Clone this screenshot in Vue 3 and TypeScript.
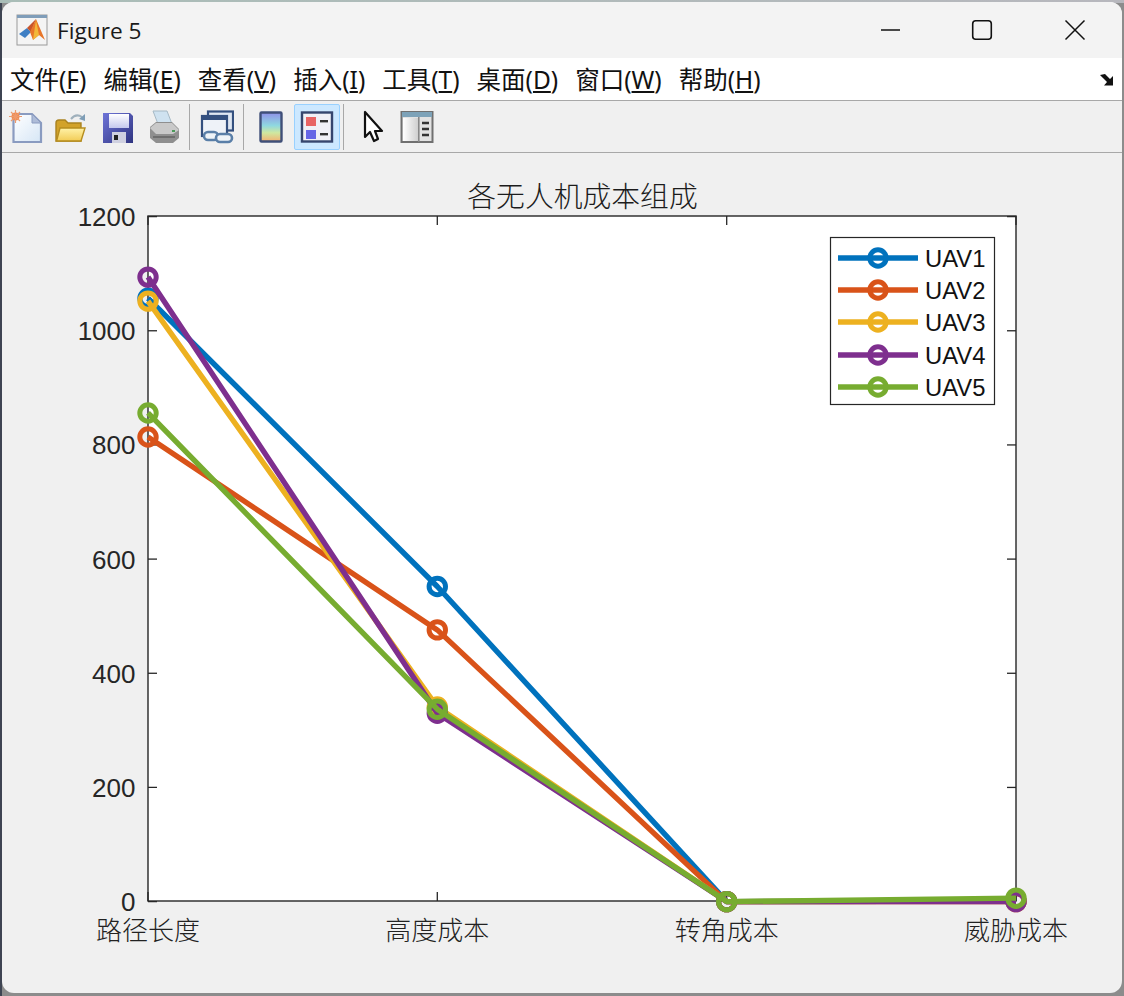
<script setup lang="ts">
// 数据值 -> 像素坐标，坐标轴范围 0~1200
const AX = { left: 148, right: 1016, top: 216, bottom: 901 }
const xPos = [148, 437.3, 726.7, 1016]
const toY = (v: number) => AX.bottom + 0.6 - (v * (AX.bottom - AX.top)) / 1200

const menus = [
  { label: '文件', key: 'F' },
  { label: '编辑', key: 'E' },
  { label: '查看', key: 'V' },
  { label: '插入', key: 'I' },
  { label: '工具', key: 'T' },
  { label: '桌面', key: 'D' },
  { label: '窗口', key: 'W' },
  { label: '帮助', key: 'H' },
]

const series = [
  { name: 'UAV1', color: '#0072bd', values: [1057, 552, 0, 1] },
  { name: 'UAV2', color: '#d95319', values: [814, 476, 0, 0] },
  { name: 'UAV3', color: '#edb120', values: [1052, 341, 0, 1] },
  { name: 'UAV4', color: '#7e2f8e', values: [1094, 330, 0, 0] },
  { name: 'UAV5', color: '#77ac30', values: [856, 337, 0, 6] },
].map((s) => ({
  ...s,
  pts: s.values.map((v, i) => ({ x: xPos[i], y: toY(v) })),
  line: s.values.map((v, i) => `${xPos[i]},${toY(v)}`).join(' '),
}))

const yTicks = [0, 200, 400, 600, 800, 1000, 1200]
const xLabels = ['路径长度', '高度成本', '转角成本', '威胁成本']
const legendRows = [258, 290, 322, 355, 387]
</script>

<template>
  <div class="desktop">
    <div class="window">
      <header class="titlebar">
        <svg class="app-icon" width="32" height="32" viewBox="0 0 32 32">
          <rect x="1" y="1" width="30" height="30" fill="#f4f4f4" stroke="#9a9a9a" />
          <rect x="1" y="1" width="30" height="3" fill="#7f9db9" />
          <path d="M3 20 L11 14 L15 18 L9 24 Z" fill="#3f7fc4" />
          <path d="M11 14 L20 5 L15 18 Z" fill="#c8552b" />
          <path d="M20 5 L29 26 L23 21 L17 26 L14 18 Z" fill="#e8762a" />
          <path d="M20 6 L23 21 L17 26 Z" fill="#f2b83a" />
        </svg>
        <span class="title-text">Figure 5</span>
        <div class="win-controls">
          <svg width="22" height="22" viewBox="0 0 22 22"><path d="M3 11 H22" stroke="#111" stroke-width="1.6" /></svg>
          <svg width="22" height="22" viewBox="0 0 22 22"><rect x="1.7" y="1.7" width="18.6" height="18.6" rx="3" fill="none" stroke="#111" stroke-width="1.6" /></svg>
          <svg width="22" height="22" viewBox="0 0 22 22"><path d="M1.5 1.5 L20.5 20.5 M20.5 1.5 L1.5 20.5" stroke="#111" stroke-width="1.5" /></svg>
        </div>
      </header>

      <nav class="menubar">
        <span v-for="m in menus" :key="m.key" class="menu-item">{{ m.label }}(<u>{{ m.key }}</u>)</span>
        <svg class="dock-arrow" width="16" height="14" viewBox="0 0 16 14">
          <path d="M1 2 L6 1 L11 6 L14 3 V12.5 H5 L8 9 L4 5 Z" fill="#111" />
        </svg>
      </nav>

      <div class="toolbar">
        <button class="tool">
          <svg width="34" height="34" viewBox="0 0 34 34">
            <defs>
              <linearGradient id="page" x1="0" y1="0" x2="1" y2="1">
                <stop offset="0" stop-color="#ffffff" />
                <stop offset="1" stop-color="#d6e6f6" />
              </linearGradient>
            </defs>
            <path d="M4.5 4 H23 L32 13 V32 H4.5 Z" fill="url(#page)" stroke="#8a9bc0" stroke-width="2.2" />
            <path d="M23 4 V13 H32 Z" fill="#aebcd8" stroke="#8a9bc0" />
            <circle cx="6.5" cy="6.5" r="4" fill="#f08a50" />
            <path d="M6.5 0 V13 M0 6.5 H13 M2 2 L11 11 M11 2 L2 11" stroke="#ee9a6c" stroke-width="1.2" />
          </svg>
        </button>
        <button class="tool">
          <svg width="34" height="34" viewBox="0 0 34 34">
            <defs>
              <linearGradient id="folder" x1="0" y1="0" x2="0" y2="1">
                <stop offset="0" stop-color="#fff2a8" />
                <stop offset="1" stop-color="#f2cc56" />
              </linearGradient>
            </defs>
            <path d="M1 13 Q1 10 4 10 H10 L13 13 H26 V31 H1 Z" fill="#d2a22a" stroke="#a98220" stroke-width="1.4" />
            <path d="M1.5 31 L5 18 H30 L26 31 Z" fill="url(#folder)" stroke="#b68d1f" stroke-width="1.4" />
            <path d="M16 9 Q21 3 27 7" fill="none" stroke="#9fb0bc" stroke-width="2" />
            <path d="M30 4 L30 11 L24 9 Z" fill="#7e9db6" />
          </svg>
        </button>
        <button class="tool">
          <svg width="34" height="34" viewBox="0 0 34 34">
            <defs>
              <linearGradient id="disk" x1="0" y1="0" x2="1" y2="1">
                <stop offset="0" stop-color="#6e74d8" />
                <stop offset="1" stop-color="#2f3480" />
              </linearGradient>
              <linearGradient id="label" x1="0" y1="0" x2="0" y2="1">
                <stop offset="0" stop-color="#ffffff" />
                <stop offset="1" stop-color="#c4c8ee" />
              </linearGradient>
            </defs>
            <path d="M2 3 H29 L32 6 V33 H2 Z" fill="url(#disk)" />
            <rect x="8" y="4" width="20" height="14" fill="url(#label)" />
            <rect x="11" y="22" width="14" height="11" fill="#cfd0e0" />
            <rect x="13" y="25" width="4" height="5" fill="#222" />
          </svg>
        </button>
        <button class="tool">
          <svg width="34" height="34" viewBox="0 0 34 34">
            <path d="M6 1 H20 L25 14 H11 Z" fill="#cfe2f0" stroke="#a5b8c4" />
            <path d="M3 17 L9 12 H25 L32 19 V28 L26 33 H9 L3 28 Z" fill="#8f8f8f" />
            <path d="M3 18 L9 13 H25 L32 20 L26 24 H9 Z" fill="#c9c9c9" />
            <rect x="25" y="20" width="3" height="2" fill="#4c9a5a" />
            <path d="M6 27 H28" stroke="#6e6e6e" stroke-width="2" />
          </svg>
        </button>
        <i class="sep first"></i>
        <button class="tool">
          <svg width="34" height="34" viewBox="0 0 34 34">
            <rect x="8" y="1.5" width="25" height="19" fill="#dfe7f2" stroke="#34507f" stroke-width="2.2" />
            <rect x="2" y="6" width="25" height="20" fill="#eef2f8" stroke="#34507f" stroke-width="2.2" />
            <rect x="2" y="6" width="25" height="4" fill="#34507f" />
            <rect x="4" y="22" width="14" height="8" rx="4" fill="#eef3f8" stroke="#5a7fa8" stroke-width="2.6" />
            <rect x="16" y="24" width="16" height="8" rx="4" fill="#eef3f8" stroke="#5a7fa8" stroke-width="2.6" />
          </svg>
        </button>
        <i class="sep"></i>
        <button class="tool">
          <svg width="34" height="34" viewBox="0 0 34 34">
            <defs>
              <linearGradient id="cbar" x1="0" y1="0" x2="0" y2="1">
                <stop offset="0" stop-color="#8f8fe8" />
                <stop offset="0.45" stop-color="#8fd8e0" />
                <stop offset="0.7" stop-color="#cfe8a0" />
                <stop offset="1" stop-color="#f4b070" />
              </linearGradient>
            </defs>
            <rect x="6.5" y="2.5" width="21" height="29" rx="1" fill="url(#cbar)" stroke="#3f4f78" stroke-width="2.4" />
          </svg>
        </button>
        <button class="tool active">
          <svg width="34" height="34" viewBox="0 0 34 34">
            <rect x="2" y="2.5" width="30" height="29" fill="#f0f0f6" stroke="#36466e" stroke-width="2.4" />
            <rect x="6" y="7" width="10" height="9" fill="#e86464" />
            <rect x="6" y="20" width="10" height="9" fill="#6666e6" />
            <rect x="20" y="10" width="8" height="2.4" fill="#333" />
            <rect x="20" y="23" width="8" height="2.4" fill="#333" />
          </svg>
        </button>
        <i class="sep last"></i>
        <button class="tool narrow">
          <svg width="34" height="34" viewBox="0 0 34 34">
            <path d="M8 2 L8 27 L13 22 L17 31 L21 29 L18 21 L25 21 Z" fill="#fff" stroke="#111" stroke-width="2.2" stroke-linejoin="round" />
          </svg>
        </button>
        <button class="tool">
          <svg width="34" height="34" viewBox="0 0 34 34">
            <defs>
              <linearGradient id="panel" x1="0" y1="0" x2="1" y2="0">
                <stop offset="0" stop-color="#ffffff" />
                <stop offset="1" stop-color="#cfcfcf" />
              </linearGradient>
            </defs>
            <rect x="1.5" y="2" width="31" height="30" fill="#e2e2e2" stroke="#707070" stroke-width="2" />
            <rect x="2" y="2" width="30" height="5" fill="#7da2b8" />
            <rect x="3" y="8" width="15" height="23" fill="url(#panel)" />
            <rect x="18" y="7" width="1.6" height="25" fill="#888" />
            <path d="M22 13 H29 M22 19 H29 M22 25 H29" stroke="#333" stroke-width="2.6" />
          </svg>
        </button>
      </div>

      <main class="figure">
        <svg class="plot" viewBox="2 153 1119 840" width="1119" height="840">
          <rect :x="AX.left" :y="AX.top" :width="AX.right - AX.left" :height="AX.bottom - AX.top" fill="#fff" stroke="#262626" stroke-width="1.4" />
          <g stroke="#262626" stroke-width="1.3">
            <template v-for="v in yTicks" :key="v">
              <line :x1="AX.left" :x2="AX.left + 9" :y1="toY(v)" :y2="toY(v)" />
              <line :x1="AX.right" :x2="AX.right - 9" :y1="toY(v)" :y2="toY(v)" />
            </template>
            <template v-for="x in xPos" :key="x">
              <line :x1="x" :x2="x" :y1="AX.bottom" :y2="AX.bottom - 9" />
              <line :x1="x" :x2="x" :y1="AX.top" :y2="AX.top + 9" />
            </template>
          </g>

          <text x="582.5" y="207" class="title" text-anchor="middle">各无人机成本组成</text>
          <text v-for="v in yTicks" :key="v" x="135.5" :y="toY(v) + 9.5" class="num" text-anchor="end">{{ v }}</text>
          <text v-for="(l, i) in xLabels" :key="l" :x="xPos[i]" y="940" class="cat" text-anchor="middle">{{ l }}</text>

          <g v-for="s in series" :key="s.name" fill="none" :stroke="s.color">
            <polyline :points="s.line" stroke-width="5.4" stroke-linejoin="round" />
            <circle v-for="(p, i) in s.pts" :key="i" :cx="p.x" :cy="p.y" r="8.2" stroke-width="5" />
          </g>

          <!-- 图例 -->
          <rect x="830.5" y="237.5" width="164" height="167" fill="#fff" stroke="#262626" stroke-width="1.2" />
          <g v-for="(s, i) in series" :key="s.name">
            <line x1="838" x2="918" :y1="legendRows[i]" :y2="legendRows[i]" :stroke="s.color" stroke-width="5.4" />
            <circle cx="878" :cy="legendRows[i]" r="8.2" fill="none" :stroke="s.color" stroke-width="5" />
            <text x="925" :y="legendRows[i] + 9" class="legend">{{ s.name }}</text>
          </g>
        </svg>
      </main>
    </div>
  </div>
</template>

<style>
html,
body {
  margin: 0;
  background: #8c8c8c;
}
</style>

<style scoped>
.desktop {
  width: 1124px;
  height: 996px;
  box-sizing: border-box;
  padding: 2px 2px 3px 2px;
  overflow: hidden;
  background:
    linear-gradient(90deg, #a9bdb7, #b7b7bd) top / 100% 3px no-repeat,
    linear-gradient(#3e4452, #3e4452) left / 2px 100% no-repeat,
    #8c8c8c;
}

.window {
  display: flex;
  flex-direction: column;
  height: 100%;
  border-radius: 12px;
  overflow: hidden;
  background: #f0f0f0;
}

.titlebar {
  display: flex;
  align-items: center;
  flex: none;
  height: 56px;
  padding-left: 14px;
  background: #f3f3f3;
}

.app-icon {
  flex: none;
}

.title-text {
  margin-left: 9px;
  font: 22.7px "Open Sans", "Noto Sans", sans-serif;
  color: #1a1a1a;
}

.win-controls {
  display: flex;
  align-items: center;
  gap: 71px;
  margin-left: auto;
  margin-right: 36px;
}

.menubar {
  display: flex;
  align-items: center;
  flex: none;
  gap: 17px;
  box-sizing: border-box;
  height: 43px;
  padding: 2px 0 0 8px;
  background: #fff;
  border-bottom: 1px solid #a8a8a8;
  font: 24.5px/1 "Noto Sans", "Noto Sans CJK SC", sans-serif;
  color: #111;
}

.menu-item {
  white-space: nowrap;
}

.dock-arrow {
  margin-left: auto;
  margin-right: 7px;
}

.toolbar {
  display: flex;
  align-items: center;
  flex: none;
  height: 51px;
  padding-left: 1px;
  background: #f0f0f0;
  border-bottom: 1px solid #a8a8a8;
}

.tool {
  display: flex;
  align-items: center;
  justify-content: center;
  flex: none;
  box-sizing: border-box;
  width: 46px;
  height: 46px;
  padding: 0;
  border: 1px solid transparent;
  border-radius: 2px;
  background: none;
}

.tool svg {
  filter: blur(0.6px);
}

.tool.narrow {
  width: 40px;
}

.tool.active {
  background: #cce8ff;
  border-color: #99d1ff;
}

.sep {
  flex: none;
  width: 1px;
  height: 46px;
  margin: 0 4px 0 3px;
  background: #a8a8a8;
}

.sep.first {
  margin-left: 2px;
}

.sep.last {
  margin-right: 10px;
}

.figure {
  flex: 1;
  min-height: 0;
}

.plot {
  display: block;
}

.num {
  font: 26px "Liberation Sans", Arial, sans-serif;
  fill: #262626;
}

.legend {
  font: 23.8px "Liberation Sans", Arial, sans-serif;
  fill: #111;
}

.title {
  font: 300 28.8px "Noto Sans CJK SC", sans-serif;
  fill: #1c1c1c;
}

.cat {
  font: 300 26px "Noto Sans CJK SC", sans-serif;
  fill: #222;
}
</style>
